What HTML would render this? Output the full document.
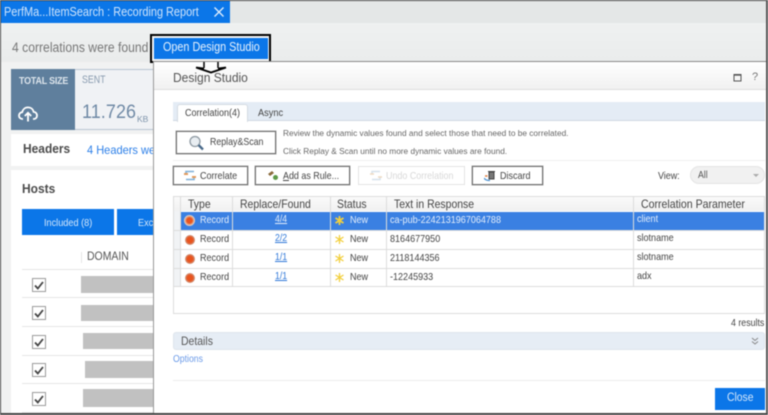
<!DOCTYPE html>
<html><head><meta charset="utf-8">
<style>
html,body{margin:0;padding:0;width:768px;height:415px;overflow:hidden;background:#fff}
#p{position:relative;width:768px;height:415px;overflow:hidden;background:#f1f2f2;font-family:"Liberation Sans",sans-serif;color:#555;filter:blur(.4px)}
#p div,#p svg{position:absolute}
.t{white-space:nowrap;line-height:1;transform:scaleX(.87);transform-origin:0 0}
.btn{background:#fff;border:1px solid #6f6f6f;box-sizing:border-box;box-shadow:0 0 0 .5px #aaa}
.line{background:#dcdcdc}
.cell{font-size:10.5px;white-space:nowrap;line-height:1;color:#444;transform:scaleX(.86);transform-origin:0 0}
.lnk{font-size:10px;color:#2f78d8;text-decoration:underline;white-space:nowrap;line-height:1;transform:scaleX(.87);transform-origin:0 0}
.gb{background:#c1c1c1}
.cb{width:12px;height:12px;border:1px solid #9c9c9c;background:#fff;box-sizing:content-box}
.h{font-size:12px;color:#444}
</style></head><body><div id="p">

<!-- top strip -->
<div style="left:0;top:0;width:768px;height:23px;background:#e4e7e7"></div>
<div style="left:0;top:23px;width:768px;height:39px;background:linear-gradient(#eff1f1,#eaecec)"></div>
<div style="left:1px;top:0;width:229px;height:23px;background:#0b76e8"></div>
<div class="t" style="left:4px;top:5px;font-size:13px;color:#cfe4fb;transform:scaleX(.84)">PerfMa...ItemSearch : Recording Report</div>
<svg style="left:213px;top:6px" width="12" height="12" viewBox="0 0 12 12"><path d="M1.5 1.5L10.5 10.5M10.5 1.5L1.5 10.5" stroke="#dcecfc" stroke-width="1.4" fill="none"/></svg>

<div class="t" style="left:12px;top:41px;font-size:13.5px;color:#777;transform:scaleX(.9)">4 correlations were found</div>

<!-- highlighted button -->
<div style="left:150px;top:34px;width:121px;height:29px;box-sizing:border-box;border:2px solid #000;background:#f6f6f6"></div>
<div style="left:154px;top:38px;width:114px;height:21px;background:#0b76e8"></div>
<div class="t" style="left:163px;top:41px;font-size:12.5px;color:#e6f1fd;transform:scaleX(.865)">Open Design Studio</div>

<!-- stat tiles -->
<div style="left:11px;top:69px;width:143px;height:61px;background:#f0f2f5;border:1px solid #b9c6d3;box-sizing:border-box"></div>
<div style="left:11px;top:69px;width:64px;height:61px;background:#5f7f9d"></div>
<div class="t" style="left:19px;top:77px;font-size:10px;font-weight:bold;color:#dde5ec;letter-spacing:-.2px;transform:scaleX(.89)">TOTAL SIZE</div>
<svg style="left:18px;top:105px" width="20" height="18" viewBox="0 0 20 18"><path d="M5 14H4.5C2.5 14 1 12.5 1 10.6C1 8.8 2.4 7.3 4.2 7.2C4.8 4.4 7 2.4 10 2.4C12.8 2.4 15 4.2 15.6 6.8C17.6 7 19 8.6 19 10.6C19 12.6 17.5 14 15.5 14H15" fill="none" stroke="#fff" stroke-width="1.8"/><path d="M10 16.5V8M6.8 11L10 7.8L13.2 11" fill="none" stroke="#fff" stroke-width="1.8"/></svg>
<div class="t" style="left:82px;top:75px;font-size:11px;color:#8a9cb0;transform:scaleX(.8)">SENT</div>
<div class="t" style="left:82px;top:103px;font-size:19.5px;color:#6f89a5;letter-spacing:.1px;transform:scaleX(.92)">11.726</div>
<div class="t" style="left:137px;top:115px;font-size:8.5px;color:#7d93aa;transform:none">KB</div>

<!-- headers card -->
<div style="left:11px;top:134px;width:143px;height:31.5px;background:#fff"></div>
<div class="t" style="left:23px;top:142px;font-size:13px;font-weight:bold;color:#4b4b4b;transform:scaleX(.92)">Headers</div>
<div class="t" style="left:87px;top:144px;font-size:12px;color:#2c7fe8;transform:scaleX(.92)">4 Headers were</div>

<!-- hosts card -->
<div style="left:11px;top:170px;width:143px;height:245px;background:#fff"></div>
<div class="t" style="left:22px;top:182px;font-size:13px;font-weight:bold;color:#4b4b4b;transform:scaleX(.92)">Hosts</div>
<div style="left:22px;top:209px;width:92px;height:26px;background:#0b76e8"></div>
<div style="left:117px;top:209px;width:37px;height:26px;background:#0b76e8"></div>
<div class="t" style="left:44px;top:218px;font-size:10.5px;color:#d6e8fb">Included (8)</div>
<div class="t" style="left:138px;top:218px;font-size:10.5px;color:#d6e8fb">Exc</div>
<div style="left:81px;top:252px;width:1px;height:11px;background:#e5e5e5"></div>
<div class="t" style="left:87px;top:252px;font-size:11.5px;color:#555;transform:scaleX(.91)">DOMAIN</div>

<div style="left:22px;top:269px;width:132px;height:1px;background:#e6e6e6"></div>
<div style="left:22px;top:297px;width:132px;height:1px;background:#e6e6e6"></div>
<div style="left:22px;top:326px;width:132px;height:1px;background:#e6e6e6"></div>
<div style="left:22px;top:355px;width:132px;height:1px;background:#e6e6e6"></div>
<div style="left:22px;top:383px;width:132px;height:1px;background:#e6e6e6"></div>
<div style="left:22px;top:412px;width:132px;height:1px;background:#e6e6e6"></div>

<div class="gb" style="left:81px;top:276px;width:73px;height:17px"></div>
<div class="gb" style="left:81px;top:305px;width:73px;height:16px"></div>
<div class="gb" style="left:83px;top:333px;width:71px;height:15.5px"></div>
<div class="gb" style="left:84.5px;top:361px;width:70px;height:17px"></div>
<div class="gb" style="left:83px;top:389px;width:71px;height:18px"></div>

<div class="cb" style="left:32px;top:278px"></div>
<div class="cb" style="left:32px;top:306px"></div>
<div class="cb" style="left:32px;top:335px"></div>
<div class="cb" style="left:32px;top:363px"></div>
<div class="cb" style="left:32px;top:392px"></div>
<svg style="left:34px;top:281px" width="10" height="9" viewBox="0 0 10 9"><path d="M1 4.5L3.8 7.5L9 1" fill="none" stroke="#444" stroke-width="1.8"/></svg>
<svg style="left:34px;top:309px" width="10" height="9" viewBox="0 0 10 9"><path d="M1 4.5L3.8 7.5L9 1" fill="none" stroke="#444" stroke-width="1.8"/></svg>
<svg style="left:34px;top:338px" width="10" height="9" viewBox="0 0 10 9"><path d="M1 4.5L3.8 7.5L9 1" fill="none" stroke="#444" stroke-width="1.8"/></svg>
<svg style="left:34px;top:366px" width="10" height="9" viewBox="0 0 10 9"><path d="M1 4.5L3.8 7.5L9 1" fill="none" stroke="#444" stroke-width="1.8"/></svg>
<svg style="left:34px;top:395px" width="10" height="9" viewBox="0 0 10 9"><path d="M1 4.5L3.8 7.5L9 1" fill="none" stroke="#444" stroke-width="1.8"/></svg>

<!-- dialog -->
<div style="left:153px;top:61px;width:613px;height:353px;background:#fff;border-left:1px solid #999;border-top:1px solid #8a8a8a;box-sizing:border-box"></div>
<div style="left:154px;top:62px;width:612px;height:28px;background:linear-gradient(#fff,#f1f1f1);border-bottom:1px solid #dedede;box-sizing:border-box"></div>
<div class="t" style="left:173px;top:71px;font-size:13px;color:#555;transform:scaleX(.925)">Design Studio</div>
<svg style="left:733px;top:73px" width="10" height="10" viewBox="0 0 10 10"><rect x="1" y="1.5" width="7" height="6.5" fill="none" stroke="#555" stroke-width="1"/><path d="M1 2H8" stroke="#555" stroke-width="1.4"/></svg>
<div class="t" style="left:752px;top:72px;font-size:11px;color:#777;transform:none">?</div>

<!-- arrow -->
<svg style="left:194px;top:62px" width="34" height="12" viewBox="0 0 34 12"><path d="M10 0V6M24 0V6" stroke="#000" stroke-width="1.5" fill="none"/><path d="M2 5.5L10 6.5M32 5.5L24 6.5M2 5.5L17 10.5L32 5.5" stroke="#000" stroke-width="1.8" fill="none"/></svg>

<!-- tabs -->
<div style="left:173px;top:102px;width:592px;height:19px;background:#e4ecf5;border-bottom:1px solid #cfd8e2;box-sizing:border-box"></div>
<div style="left:177px;top:104px;width:71px;height:18px;background:#fff;border:1px solid #d5dbe2;border-bottom:0;border-radius:3px 3px 0 0;box-sizing:border-box"></div>
<div class="t" style="left:185px;top:109px;font-size:10px;color:#444;transform:scaleX(.9)">Correlation(4)</div>
<div class="t" style="left:258px;top:109px;font-size:10px;color:#444;transform:scaleX(.92)">Async</div>

<!-- replay & scan -->
<div class="btn" style="left:176px;top:131px;width:100px;height:23px"></div>
<svg style="left:188px;top:135px" width="17" height="16" viewBox="0 0 17 16"><circle cx="7" cy="6.5" r="5" fill="#e9eef2" stroke="#8f9aa3" stroke-width="1.3"/><path d="M10.5 10L15 14.5" stroke="#4a6a8a" stroke-width="2.4"/></svg>
<div class="t" style="left:210px;top:137px;font-size:10.5px;color:#444;transform:scaleX(.84)">Replay&amp;Scan</div>
<div class="t" style="left:283px;top:128.5px;font-size:8.7px;color:#666;transform:scaleX(.955)">Review the dynamic values found and select those that need to be correlated.</div>
<div class="t" style="left:283px;top:147px;font-size:8.7px;color:#666;transform:scaleX(.953)">Click Replay &amp; Scan until no more dynamic values are found.</div>
<div style="left:173px;top:160px;width:592px;height:1px;background:#efefef"></div>

<!-- toolbar -->
<div class="btn" style="left:173px;top:166px;width:75px;height:19px"></div>
<svg style="left:184px;top:169px" width="12" height="13" viewBox="0 0 12 13"><path d="M2 5V2.5H10M10 8V10.5H2" fill="none" stroke="#7fb0d8" stroke-width="1.6"/><path d="M0 5H4M8 8H12" stroke="#e39a5c" stroke-width="2"/></svg>
<div class="t" style="left:200px;top:171px;font-size:10.5px;color:#444;transform:scaleX(.86)">Correlate</div>
<div class="btn" style="left:255px;top:166px;width:95px;height:19px"></div>
<svg style="left:267px;top:169px" width="12" height="13" viewBox="0 0 12 13"><path d="M1 5L5 2L7 4L3 7Z" fill="#8a6a3c"/><circle cx="8.5" cy="8.5" r="2.5" fill="#5d9a48"/></svg>
<div class="t" style="left:283px;top:171px;font-size:10.5px;color:#444;transform:scaleX(.85)"><u>A</u>dd as Rule...</div>
<div style="left:358px;top:166px;width:107px;height:19px;background:#fff;border:1px solid #e3e3e3;box-sizing:border-box"></div>
<svg style="left:370px;top:169px" width="12" height="13" viewBox="0 0 12 13"><path d="M2 5V2.5H10M10 8V10.5H2" fill="none" stroke="#d6e2ec" stroke-width="1.5"/><path d="M0 5H4M8 8H12" stroke="#eed9c2" stroke-width="1.5"/></svg>
<div class="t" style="left:386px;top:171px;font-size:10.5px;color:#d8d8d8;transform:scaleX(.85)">Undo Correlation</div>
<div class="btn" style="left:472px;top:166px;width:71px;height:19px"></div>
<svg style="left:484px;top:169px" width="12" height="13" viewBox="0 0 12 13"><path d="M5 3H10V10H5ZM4 2.5H11" fill="#777" stroke="#444" stroke-width="1"/><path d="M0 9C1 11 3 11.5 6 11.5" fill="none" stroke="#4a90d0" stroke-width="1.3"/><path d="M1 7H3.5" stroke="#e08040" stroke-width="1.5"/></svg>
<div class="t" style="left:500px;top:171px;font-size:10.5px;color:#444;transform:scaleX(.857)">Discard</div>
<div class="t" style="left:658px;top:171px;font-size:10.5px;color:#444;transform:scaleX(.85)">View:</div>
<div style="left:690px;top:166px;width:75px;height:18px;border-radius:9px;background:#f1f1f1;border:1px solid #e4e4e4;box-sizing:border-box"></div>
<div class="t" style="left:698px;top:171px;font-size:10px;color:#555">All</div>
<div style="left:753px;top:174px;width:0;height:0;border-left:3px solid transparent;border-right:3px solid transparent;border-top:3px solid #aaa"></div>

<!-- table -->
<div style="left:173px;top:196px;width:592px;height:118px;background:#fff;border:1px solid #dcdcdc;box-sizing:border-box"></div>
<div style="left:174px;top:197px;width:590px;height:14px;background:linear-gradient(#fafafa,#f1f1f1)"></div>
<div style="left:174px;top:211px;width:7px;height:75px;background:#f1f3f5"></div>
<div style="left:181px;top:211.5px;width:583px;height:18.5px;background:#3a80e2"></div>
<div class="line" style="left:174px;top:230px;width:590px;height:1px"></div>
<div class="line" style="left:174px;top:249px;width:590px;height:1px"></div>
<div class="line" style="left:174px;top:268px;width:590px;height:1px"></div>
<div class="line" style="left:174px;top:286px;width:590px;height:1px"></div>
<div class="line" style="left:180px;top:197px;width:1px;height:89px"></div>
<div class="line" style="left:232px;top:197px;width:1px;height:89px"></div>
<div class="line" style="left:330px;top:197px;width:1px;height:89px"></div>
<div class="line" style="left:386px;top:197px;width:1px;height:89px"></div>
<div class="line" style="left:633px;top:197px;width:1px;height:89px"></div>

<div class="t h" style="left:188px;top:198px">Type</div>
<div class="t h" style="left:240px;top:198px">Replace/Found</div>
<div class="t h" style="left:337px;top:198px">Status</div>
<div class="t h" style="left:394px;top:198px">Text in Response</div>
<div class="t h" style="left:641px;top:198px;transform:scaleX(.88)">Correlation Parameter</div>

<!-- rows -->
<div style="left:184px;top:215px;width:11px;height:11px;border-radius:50%;background:radial-gradient(#e8541e 0 35%,#e89a70 50%,#d8d8e0 70%)"></div>
<div style="left:185px;top:235px;width:10px;height:10px;border-radius:50%;background:radial-gradient(#e8541e 0 40%,#c9a898 75%)"></div>
<div style="left:185px;top:253.5px;width:10px;height:10px;border-radius:50%;background:radial-gradient(#e8541e 0 40%,#c9a898 75%)"></div>
<div style="left:185px;top:272.5px;width:10px;height:10px;border-radius:50%;background:radial-gradient(#e8541e 0 40%,#c9a898 75%)"></div>
<div class="cell" style="left:200px;top:215px;color:#e4eefb">Record</div>
<div class="cell" style="left:200px;top:234px">Record</div>
<div class="cell" style="left:200px;top:253px">Record</div>
<div class="cell" style="left:200px;top:272px">Record</div>

<div class="lnk" style="left:275px;top:215px;color:#e4eefb">4/4</div>
<div class="lnk" style="left:275px;top:234px">2/2</div>
<div class="lnk" style="left:275px;top:253px">1/1</div>
<div class="lnk" style="left:275px;top:272px">1/1</div>

<svg style="left:334px;top:215px" width="11" height="11" viewBox="0 0 11 11"><path d="M5.5 1V10M1.5 3L9.5 8M9.5 3L1.5 8" stroke="#f2cf3c" stroke-width="1.8"/></svg>
<svg style="left:334px;top:234px" width="11" height="11" viewBox="0 0 11 11"><path d="M5.5 1V10M1.500 3L9.5 8M9.5 3L1.5 8" stroke="#f2cf3c" stroke-width="1.3"/></svg>
<svg style="left:334px;top:253px" width="11" height="11" viewBox="0 0 11 11"><path d="M5.5 1V10M1.5 3L9.5 8M9.5 3L1.5 8" stroke="#f2cf3c" stroke-width="1.3"/></svg>
<svg style="left:334px;top:272px" width="11" height="11" viewBox="0 0 11 11"><path d="M5.5 1V10M1.5 3L9.5 8M9.5 3L1.5 8" stroke="#f2cf3c" stroke-width="1.3"/></svg>
<div class="cell" style="left:350px;top:215px;color:#e4eefb">New</div>
<div class="cell" style="left:350px;top:234px">New</div>
<div class="cell" style="left:350px;top:253px">New</div>
<div class="cell" style="left:350px;top:272px">New</div>

<div class="cell" style="left:390px;top:215px;color:#e4eefb">ca-pub-2242131967064788</div>
<div class="cell" style="left:390px;top:234px">8164677950</div>
<div class="cell" style="left:390px;top:253px">2118144356</div>
<div class="cell" style="left:390px;top:272px">-12245933</div>
<div class="cell" style="left:637px;top:214px;color:#e4eefb">client</div>
<div class="cell" style="left:637px;top:233px">slotname</div>
<div class="cell" style="left:637px;top:252px">slotname</div>
<div class="cell" style="left:637px;top:271px">adx</div>

<div class="t" style="left:731px;top:318px;font-size:10.5px;color:#444;transform:scaleX(.84)">4 results</div>

<!-- details -->
<div style="left:173px;top:332px;width:592px;height:18px;background:#e6edf5;border:1px solid #dfe5ec;border-radius:3px;box-sizing:border-box"></div>
<div class="t" style="left:181px;top:335px;font-size:12px;color:#555">Details</div>
<svg style="left:750px;top:336px" width="10" height="10" viewBox="0 0 10 10"><path d="M2 2L5 4.5L8 2M2 5.5L5 8L8 5.5" stroke="#888" fill="none"/></svg>
<div class="t" style="left:173px;top:355px;font-size:10px;color:#6a9ae8">Options</div>
<div style="left:173px;top:380px;width:592px;height:1px;background:#ececec"></div>

<div style="left:715px;top:388px;width:50px;height:22px;background:#0b76e8"></div>
<div class="t" style="left:727px;top:393px;font-size:11.5px;color:#d6e8fb;transform:scaleX(.9)">Close</div>

<!-- outer frame -->
<div style="left:0;top:0;width:768px;height:415px;box-sizing:border-box;border:1px solid #444;border-right:2px solid #555;border-bottom:2px solid #444"></div>
</div></body></html>
